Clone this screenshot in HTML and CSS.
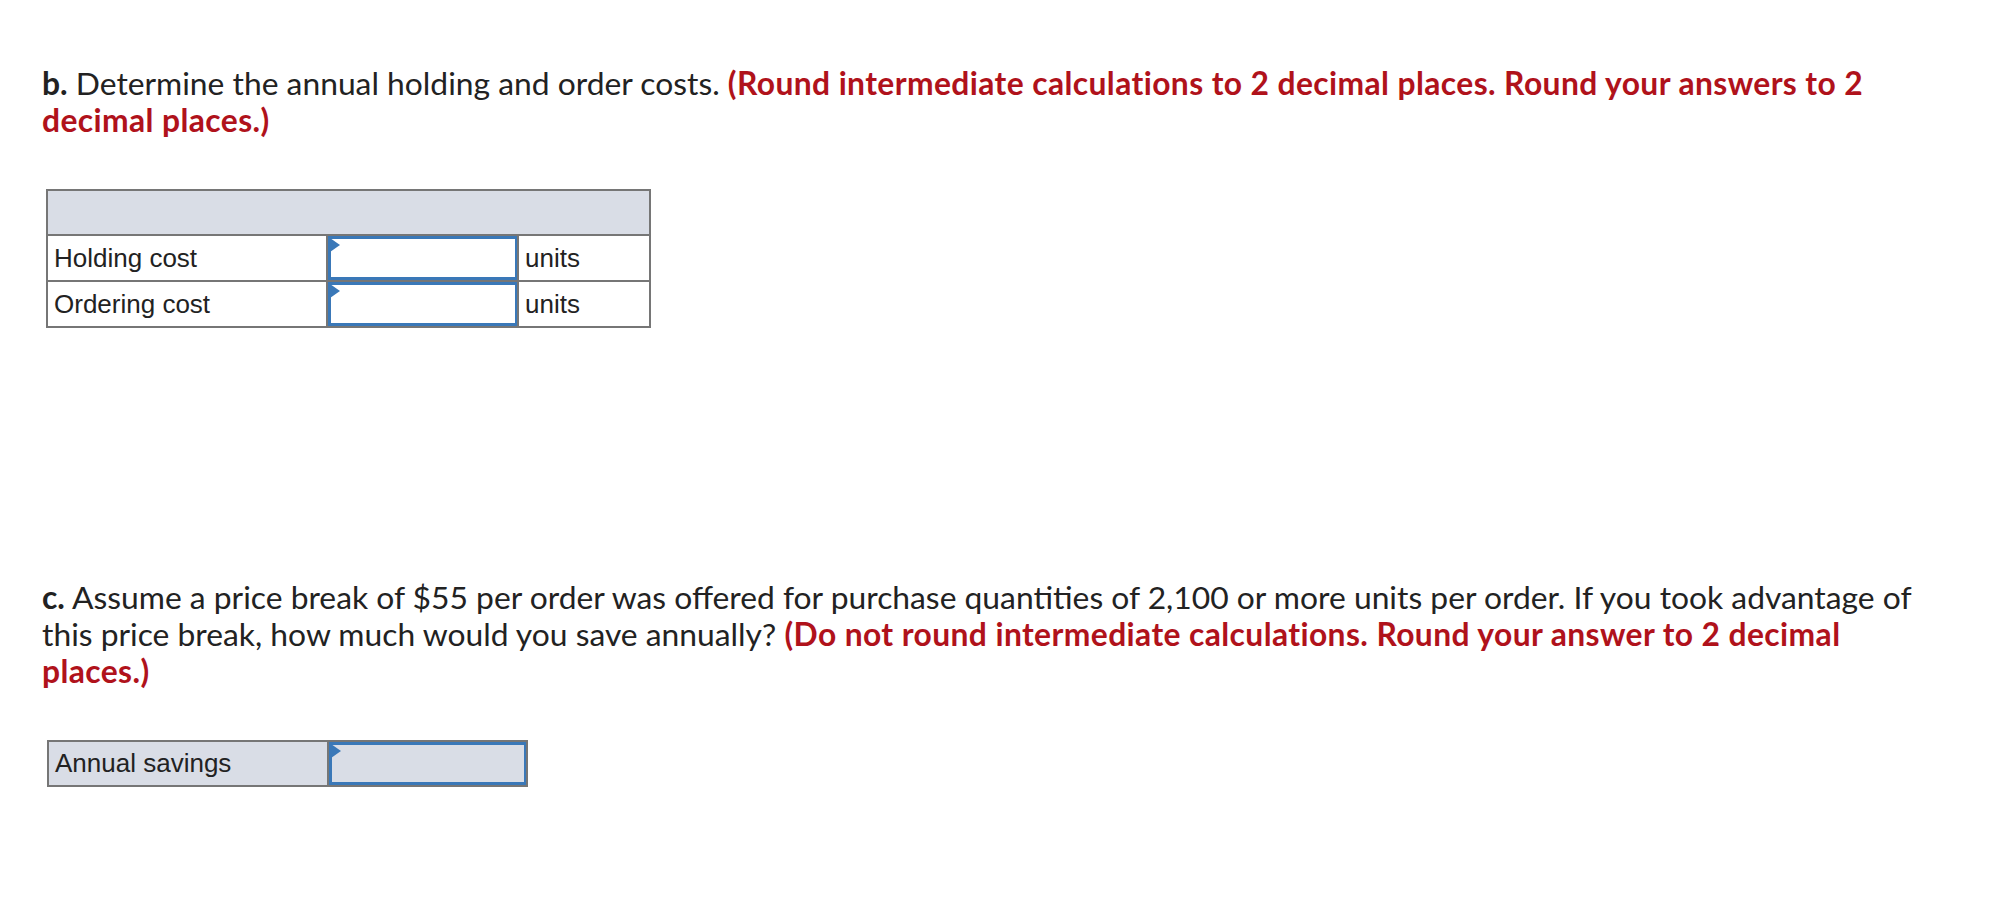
FILE: index.html
```html
<!DOCTYPE html>
<html>
<head>
<meta charset="utf-8">
<link rel="stylesheet" href="styles.css">
</head>
<body>
<div class="page">
  <p class="question q-b"><b class="label">b.</b> Determine the annual holding and order costs. <span class="hint">(Round intermediate calculations to 2 decimal places. Round your answers to 2 decimal places.)</span></p>

  <table class="grid costs">
    <tr class="head"><td colspan="3"></td></tr>
    <tr>
      <td class="name">Holding cost</td>
      <td class="entry"><div class="box"><span class="flag"></span></div></td>
      <td class="unit">units</td>
    </tr>
    <tr>
      <td class="name">Ordering cost</td>
      <td class="entry"><div class="box"><span class="flag"></span></div></td>
      <td class="unit">units</td>
    </tr>
  </table>

  <p class="question q-c"><b class="label">c.</b> Assume a price break of $55 per order was offered for purchase quantities of 2,100 or more units per order. If you took advantage of this price break, how much would you save annually? <span class="hint">(Do not round intermediate calculations. Round your answer to 2 decimal places.)</span></p>

  <table class="grid savings">
    <tr>
      <td class="name">Annual savings</td>
      <td class="entry"><div class="box"><span class="flag"></span></div></td>
    </tr>
  </table>
</div>
</body>
</html>
```
FILE: styles.css
```css
html, body {
  margin: 0;
  padding: 0;
  background: #ffffff;
}

.page {
  width: 1910px;
  padding: 65px 0 0 42px;
  font-family: Lato, "Open Sans", sans-serif;
  color: #222222;
}

.question {
  margin: 0;
  font-size: 31.8px;
  line-height: 37px;
}

.label {
  font-weight: 700;
}

.hint {
  color: #b0121b;
  font-weight: 700;
  letter-spacing: 0.4px;
}

.grid {
  border-collapse: collapse;
  font-family: "Liberation Sans", Arial, sans-serif;
  font-size: 26px;
  color: #222222;
}

.grid td {
  border: 2px solid #767676;
  padding: 0;
  height: 44px;
}

.costs {
  margin: 50px 0 0 4px;
}

.costs .head td {
  background: #d9dde6;
  height: 43px;
}

.name {
  width: 272px;
  padding-left: 6px !important;
}

.unit {
  width: 124px;
  padding-left: 6px !important;
}

.entry {
  width: 189px;
  position: relative;
}

.box {
  position: absolute;
  inset: 0;
  border: 3px solid #3a78b8;
  border-right-width: 2px;
}

.flag {
  position: absolute;
  left: -1px;
  top: -1px;
  width: 0;
  height: 0;
  border-top: 7px solid transparent;
  border-bottom: 7px solid transparent;
  border-left: 10px solid #3a78b8;
}

.q-c {
  margin-top: 251px;
}

.savings {
  margin: 50px 0 0 5px;
}

.savings td {
  background: #d9dde6;
  height: 43px;
}

.savings .name {
  width: 272px;
}

.savings .entry {
  width: 197px;
}
```
